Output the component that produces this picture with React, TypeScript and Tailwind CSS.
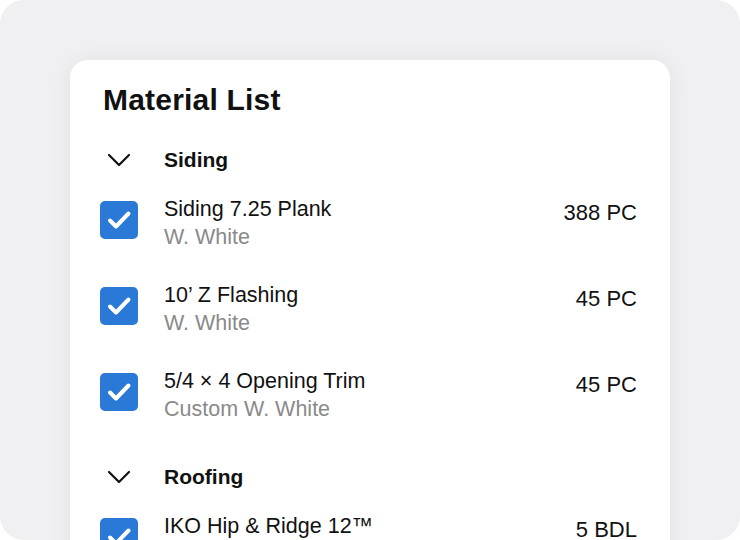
import React from 'react'

type Item = {
  name: string
  color: string
  qty: string
}

type Section = {
  title: string
  items: Item[]
}

const sections: Section[] = [
  {
    title: 'Siding',
    items: [
      { name: 'Siding 7.25 Plank', color: 'W. White', qty: '388 PC' },
      { name: '10’ Z Flashing', color: 'W. White', qty: '45 PC' },
      { name: '5/4 × 4 Opening Trim', color: 'Custom W. White', qty: '45 PC' },
    ],
  },
  {
    title: 'Roofing',
    items: [{ name: 'IKO Hip & Ridge 12™', color: 'Charcoal Grey', qty: '5 BDL' }],
  },
]

function Chevron() {
  return (
    <svg width="24" height="14" viewBox="0 0 24 14" fill="none">
      <polyline
        points="2,2 12,12 22,2"
        stroke="#111"
        strokeWidth="2.2"
        strokeLinecap="round"
        strokeLinejoin="round"
      />
    </svg>
  )
}

function Checkbox() {
  return (
    <div className="flex h-[38px] w-[38px] shrink-0 items-center justify-center rounded-[5px] bg-[#2a79d6]">
      <svg width="38" height="38" viewBox="0 0 38 38" fill="none">
        <polyline
          points="10,19.5 16,25.5 28.5,12.5"
          stroke="#fff"
          strokeWidth="4"
          strokeLinecap="round"
          strokeLinejoin="round"
        />
      </svg>
    </div>
  )
}

function Row({ item }: { item: Item }) {
  return (
    <div className="flex items-start">
      <div className="mt-[6px]">
        <Checkbox />
      </div>
      <div className="ml-[26px] flex-1 text-[21.5px] leading-[28px]">
        <div className="text-[#111]">{item.name}</div>
        <div className="text-[#8a8a8a]">{item.color}</div>
      </div>
      <div className="mt-[4px] text-[22px] leading-[28px] text-[#111]">{item.qty}</div>
    </div>
  )
}

export default function App() {
  return (
    <div className="h-[540px] w-[740px] bg-white" style={{ fontFamily: '"Liberation Sans", Arial, sans-serif' }}>
      <div className="h-full overflow-hidden rounded-[24px] bg-[#f0f0f2] px-[70px] pt-[60px]">
        <div className="h-[520px] rounded-[18px] bg-white pl-[30px] pr-[33px] pt-[22px] shadow-[0_0_24px_rgba(0,0,0,0.06)]">
          <h1 className="ml-[3px] text-[30px] font-bold leading-[36px] tracking-[0.2px] text-[#111]">
            Material List
          </h1>

          <div className="mt-[28px]">
            {sections.map((section, i) => (
              <div key={section.title} className={i > 0 ? 'mt-[40px]' : ''}>
                <div className="flex h-[28px] items-center">
                  <div className="flex w-[38px] justify-center">
                    <Chevron />
                  </div>
                  <div className="ml-[26px] text-[21px] font-bold text-[#111]">{section.title}</div>
                </div>
                <div className="mt-[21px] flex flex-col gap-[30px]">
                  {section.items.map((item) => (
                    <Row key={item.name} item={item} />
                  ))}
                </div>
              </div>
            ))}
          </div>
        </div>
      </div>
    </div>
  )
}
